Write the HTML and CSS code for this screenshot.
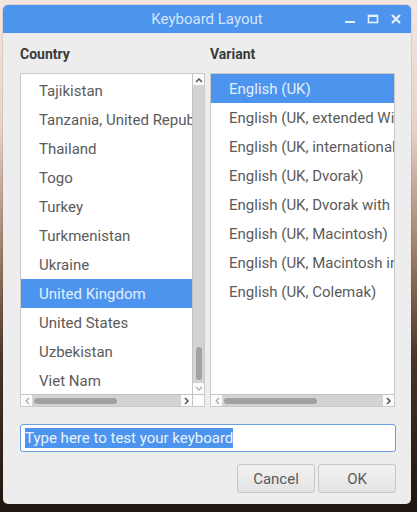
FILE: index.html
```html
<html>
<head>
    <link rel="stylesheet" href="styles.css">
</head>
<body>
    <div class="window">
        <div class="titlebar">
            <span class="title">Keyboard Layout</span>
            <div class="title-buttons">
                <svg width="12" height="12" viewBox="0 0 12 12"><rect x="1" y="8" width="10" height="2" fill="#e8f0fc"/></svg>
                <svg width="12" height="12" viewBox="0 0 12 12"><rect x="1.5" y="2.5" width="9" height="7" fill="none" stroke="#e8f0fc" stroke-width="1.6"/><rect x="1" y="2" width="10" height="2" fill="#e8f0fc"/></svg>
                <svg width="12" height="12" viewBox="0 0 12 12"><path d="M2 2 L10 10 M10 2 L2 10" stroke="#e8f0fc" stroke-width="2.2"/></svg>
            </div>
        </div>

        <div class="content">
            <div class="columns">
                <div class="column">
                    <div class="column-label">Country</div>
                    <div class="list-box">
                        <div class="viewport country-view">
                            <div class="row">Tajikistan</div>
                            <div class="row">Tanzania, United Republic of</div>
                            <div class="row">Thailand</div>
                            <div class="row">Togo</div>
                            <div class="row">Turkey</div>
                            <div class="row">Turkmenistan</div>
                            <div class="row">Ukraine</div>
                            <div class="row selected">United Kingdom</div>
                            <div class="row">United States</div>
                            <div class="row">Uzbekistan</div>
                            <div class="row">Viet Nam</div>
                        </div>
                        <div class="vscroll">
                            <div class="arrow-btn">
                                <svg width="8" height="6" viewBox="0 0 8 6"><path d="M1 5 L4 2 L7 5" fill="none" stroke="#555" stroke-width="1.5"/></svg>
                            </div>
                            <div class="vtrack">
                                <div class="vthumb"></div>
                            </div>
                            <div class="arrow-btn">
                                <svg width="8" height="6" viewBox="0 0 8 6"><path d="M1 1 L4 4 L7 1" fill="none" stroke="#aaa" stroke-width="1.2"/></svg>
                            </div>
                        </div>
                        <div class="hscroll">
                            <div class="arrow-btn">
                                <svg width="6" height="8" viewBox="0 0 6 8"><path d="M5 1 L2 4 L5 7" fill="none" stroke="#aaa" stroke-width="1.2"/></svg>
                            </div>
                            <div class="htrack">
                                <div class="hthumb country-thumb"></div>
                            </div>
                            <div class="arrow-btn">
                                <svg width="6" height="8" viewBox="0 0 6 8"><path d="M1 1 L4 4 L1 7" fill="none" stroke="#555" stroke-width="1.5"/></svg>
                            </div>
                        </div>
                        <div class="corner"></div>
                    </div>
                </div>

                <div class="column">
                    <div class="column-label">Variant</div>
                    <div class="list-box no-vscroll">
                        <div class="viewport">
                            <div class="row selected">English (UK)</div>
                            <div class="row">English (UK, extended WinKeys)</div>
                            <div class="row">English (UK, international with dead keys)</div>
                            <div class="row">English (UK, Dvorak)</div>
                            <div class="row">English (UK, Dvorak with UK punctuation)</div>
                            <div class="row">English (UK, Macintosh)</div>
                            <div class="row">English (UK, Macintosh international)</div>
                            <div class="row">English (UK, Colemak)</div>
                        </div>
                        <div class="hscroll">
                            <div class="arrow-btn">
                                <svg width="6" height="8" viewBox="0 0 6 8"><path d="M5 1 L2 4 L5 7" fill="none" stroke="#aaa" stroke-width="1.2"/></svg>
                            </div>
                            <div class="htrack">
                                <div class="hthumb variant-thumb"></div>
                            </div>
                            <div class="arrow-btn">
                                <svg width="6" height="8" viewBox="0 0 6 8"><path d="M1 1 L4 4 L1 7" fill="none" stroke="#555" stroke-width="1.5"/></svg>
                            </div>
                        </div>
                    </div>
                </div>
            </div>

            <div class="test-input">
                <span class="test-text">Type here to test your keyboard</span>
            </div>

            <div class="actions">
                <button>Cancel</button>
                <button>OK</button>
            </div>
        </div>
    </div>
</body>
</html>
```

FILE: styles.css
```css
body {
    margin: 0;
    width: 417px;
    height: 512px;
    padding: 5px 0 0 3px;
    box-sizing: border-box;
    font-family: Roboto, "Liberation Sans", sans-serif;
    background: linear-gradient(180deg, #f3e6e1 0%, #e8d2c8 25%, #9c7a66 50%, #4a3528 70%, #1e1712 100%);
    overflow: hidden;
}

.window {
    width: 408px;
    height: 499px;
    background: #ededed;
    border-radius: 5px;
    display: flex;
    flex-direction: column;
    overflow: hidden;
    box-shadow: 0 0 0 1px rgba(0, 0, 0, .08);
}

.titlebar {
    height: 28px;
    flex-shrink: 0;
    background: #4d94ee;
    display: flex;
    align-items: center;
    justify-content: center;
    position: relative;
}

.title {
    color: #d4e4fb;
    font-size: 15px;
}

.title-buttons {
    position: absolute;
    right: 9px;
    top: 8px;
    display: flex;
    gap: 11px;
}

.content {
    flex: 1;
    padding: 12px 15px 0 17px;
    display: flex;
    flex-direction: column;
}

.columns {
    display: flex;
    gap: 5px;
}

.column {
    width: 185px;
    display: flex;
    flex-direction: column;
}

.column-label {
    font-weight: bold;
    font-size: 14px;
    color: #3a3a3a;
    height: 18px;
    line-height: 18px;
    margin-bottom: 10px;
}

.list-box {
    height: 334px;
    box-sizing: border-box;
    border: 1px solid #c9c9c9;
    background: #fff;
    display: grid;
    grid-template-columns: 1fr 12px;
    grid-template-rows: 1fr 12px;
}

.list-box.no-vscroll {
    grid-template-columns: 1fr;
}

.viewport {
    overflow: hidden;
    display: flex;
    flex-direction: column;
}

.country-view {
    padding-top: 2px;
}

.row {
    height: 29px;
    line-height: 30px;
    flex-shrink: 0;
    padding-left: 18px;
    font-size: 15px;
    color: #5b5b5b;
    white-space: nowrap;
}

.row.selected {
    background: #4d94ee;
    color: #e3eefc;
}

.vscroll {
    display: flex;
    flex-direction: column;
    background: #d3d3d3;
    border-left: 1px solid #c4c4c4;
}

.vtrack {
    flex: 1;
    display: flex;
    flex-direction: column;
    justify-content: flex-end;
    align-items: center;
    padding-bottom: 3px;
}

.vthumb {
    width: 6px;
    height: 33px;
    border-radius: 3px;
    background: #a2a2a2;
}

.hscroll {
    display: flex;
    background: #d3d3d3;
    border-top: 1px solid #c4c4c4;
}

.htrack {
    flex: 1;
    display: flex;
    align-items: center;
    padding-left: 2px;
}

.hthumb {
    height: 6px;
    border-radius: 3px;
    background: #a2a2a2;
}

.country-thumb {
    width: 83px;
}

.variant-thumb {
    width: 93px;
}

.arrow-btn {
    width: 11px;
    height: 11px;
    flex-shrink: 0;
    background: #fbfbfb;
    display: flex;
    align-items: center;
    justify-content: center;
}

.corner {
    background: #fbfbfb;
    border-top: 1px solid #c4c4c4;
    border-left: 1px solid #c4c4c4;
}

.test-input {
    margin-top: 17px;
    height: 28px;
    box-sizing: border-box;
    border: 1px solid #6b9de2;
    border-radius: 3px;
    background: #fff;
    display: flex;
    align-items: center;
    padding-left: 4px;
}

.test-text {
    background: #4d94ee;
    color: #eaf2fd;
    font-size: 15px;
    line-height: 20px;
}

.actions {
    margin-top: 12px;
    display: flex;
    justify-content: flex-end;
    gap: 3px;
}

button {
    width: 78px;
    height: 29px;
    margin: 0;
    padding: 0;
    border: 1px solid #c6c6c6;
    border-radius: 3px;
    background: linear-gradient(180deg, #f2f2f2, #e3e3e3);
    font-family: Roboto, "Liberation Sans", sans-serif;
    font-size: 15px;
    color: #5a5a5a;
}
```
